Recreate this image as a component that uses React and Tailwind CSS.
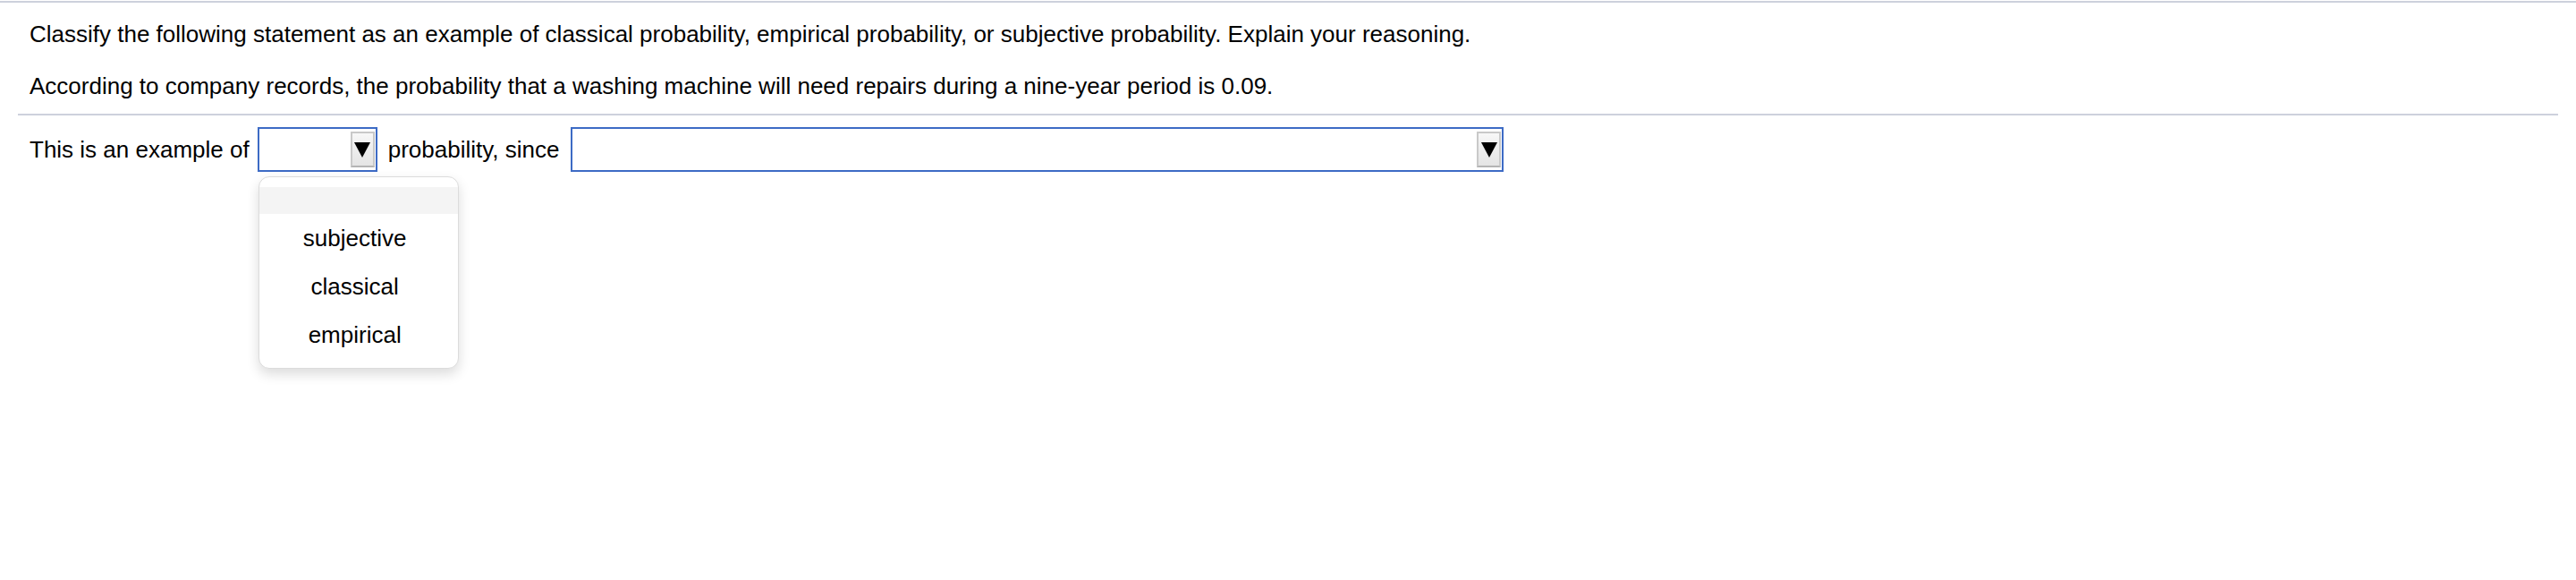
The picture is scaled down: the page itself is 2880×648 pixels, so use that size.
import React from 'react';

const OPTIONS = ['subjective', 'classical', 'empirical'];

const Arrow = () => (
  <span className="flex h-[40px] w-[27px] items-center justify-center border-2 border-[#c9c9c9] border-b-[#b4b4b4] bg-gradient-to-b from-[#f7f7f7] to-[#e4e4e4]">
    <svg width="18" height="17" viewBox="0 0 18 17">
      <polygon points="0,0 18,0 9,17" fill="#000" />
    </svg>
  </span>
);

const Select = ({ width, open }) => (
  <span
    className={`relative inline-flex h-[50px] ${width} items-start justify-end border-2 border-[#3d6bc5] bg-white pr-[1px] pt-[3px] align-middle`}>
    <Arrow />
    {open && (
      <div className="absolute left-[-1px] top-[53px] z-10 w-[224px] rounded-[12px] border border-[#dcdcdc] bg-white pb-[10px] pt-[11px] shadow-[0_6px_14px_rgba(0,0,0,0.14)]">
        <div className="h-[30px] bg-[#f4f4f4]" />
        {OPTIONS.map((opt) => (
          <div
            key={opt}
            className="flex h-[54px] items-center justify-center pr-[8px] text-[26px] leading-[30px] text-black">
            {opt}
          </div>
        ))}
      </div>
    )}
  </span>
);

export default function App() {
  return (
    <div
      className="min-h-[648px] bg-white text-black"
      style={{ fontFamily: '"Liberation Sans", Arial, Helvetica, sans-serif' }}>
      <div className="mt-[1px] h-[2px] bg-[#cdd1dc]" />

      <div className="pl-[33px] text-[26px] leading-[30px]">
        <p className="pt-[20px]">
          Classify the following statement as an example of classical probability, empirical
          probability, or subjective probability. Explain your reasoning.
        </p>
        <p className="pt-[28px]">
          According to company records, the probability that a washing machine will need repairs
          during a nine-year period is 0.09.
        </p>
      </div>

      <div className="ml-[20px] mr-[20px] mt-[16px] h-[2px] bg-[#cdd1dc]" />

      <div className="flex items-center pl-[33px] pt-[13px] text-[26px] leading-[30px]">
        <span>This is an example of</span>
        <span className="ml-[9px]">
          <Select width="w-[134px]" open />
        </span>
        <span className="ml-[12px]">probability, since</span>
        <span className="ml-[13px]">
          <Select width="w-[1043px]" />
        </span>
      </div>
    </div>
  );
}
